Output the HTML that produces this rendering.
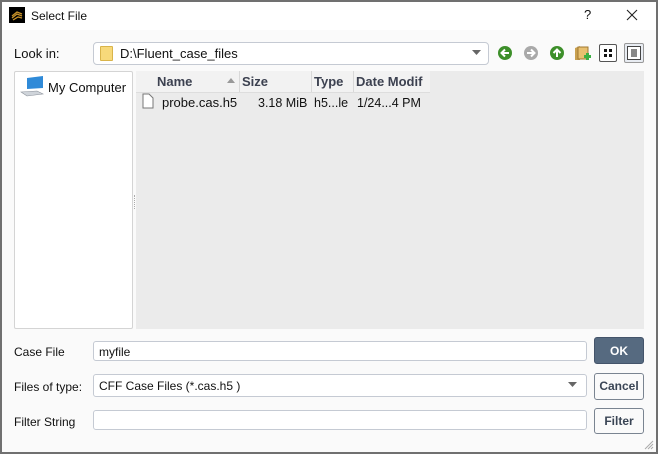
<!DOCTYPE html>
<html><head><meta charset="utf-8"><style>
*{box-sizing:border-box;margin:0;padding:0}
body{width:658px;height:454px;overflow:hidden;font-family:"Liberation Sans",sans-serif;font-size:12px;color:#111;background:#fafafa}
.win{position:absolute;left:0;top:0;width:658px;height:454px;background:#fafafa}
.frame{position:absolute;left:0;top:0;width:658px;height:454px;border:2px solid #707070}
.abs{position:absolute}
.title{left:0;top:0;width:658px;height:30px;background:#fff}
.inp{background:#fff;border:1px solid #c5cad3;border-radius:3px}
.btn{border:1px solid #7a8491;border-radius:3px;background:#fafafa;font-weight:bold;font-size:12px;color:#3a4555;text-align:center;line-height:24px}
.hdr{font-weight:bold;color:#3c4150;top:71px;height:21px;line-height:21px;border-right:1px solid #d8d8d8;font-size:13px}
</style></head><body><div class="win">
<div class="abs title"></div>
<div class="abs" style="left:9px;top:7px;width:16px;height:16px;background:#000"><svg width="16" height="16"><path d="M3 9 L8 5 L13 7 M3 11 L8 7 L13 9 M4 13 L9 10 L13 11" stroke="#c8922a" stroke-width="1.3" fill="none"/></svg></div>
<div class="abs" style="left:31px;top:9px;font-size:12px">Select File</div>
<div class="abs" style="left:584px;top:7px;font-size:13px">?</div>
<svg class="abs" style="left:626px;top:9px" width="12" height="12"><path d="M1 1L11 11M11 1L1 11" stroke="#222" stroke-width="1.1"/></svg>

<div class="abs" style="left:14px;top:46px;font-size:13px">Look in:</div>
<div class="abs inp" style="left:93px;top:42px;width:396px;height:23px;border-radius:4px"></div>
<div class="abs" style="left:100px;top:46px;width:13px;height:15px;background:#f7d97a;border:1px solid #d9b44a;border-radius:1px"></div>
<div class="abs" style="left:120px;top:46px;font-size:13px">D:\Fluent_case_files</div>
<svg class="abs" style="left:472px;top:50px" width="9" height="6"><path d="M0 0H9L4.5 5Z" fill="#666"/></svg>
<svg class="abs" style="left:497px;top:45px" width="16" height="16"><circle cx="8" cy="8" r="7" fill="#3d8f2a"/><path d="M12 8H5M8 4.5L4.5 8L8 11.5" stroke="#fff" stroke-width="2" fill="none"/></svg>
<svg class="abs" style="left:523px;top:45px" width="16" height="16"><circle cx="8" cy="8" r="7" fill="#a9a9a9"/><path d="M4 8H11M8 4.5L11.5 8L8 11.5" stroke="#fff" stroke-width="2" fill="none"/></svg>
<svg class="abs" style="left:549px;top:45px" width="16" height="16"><circle cx="8" cy="8" r="7" fill="#3d8f2a"/><path d="M8 12V5M4.5 8L8 4.5L11.5 8" stroke="#fff" stroke-width="2" fill="none"/></svg>
<svg class="abs" style="left:574px;top:44px" width="18" height="18"><path d="M1 4L6 2V16L1 16Z" fill="#c8a050"/><path d="M4 3H14V15H4Z" fill="#e8c070" stroke="#a07830"/><rect x="10" y="11" width="7" height="3" fill="#3cb043"/><rect x="12" y="9" width="3" height="7" fill="#3cb043"/></svg>
<div class="abs" style="left:599px;top:44px;width:18px;height:18px;border:1px solid #555;border-radius:2px;background:#fff"><svg width="16" height="16"><rect x="4" y="4" width="3" height="3" fill="#111"/><rect x="9" y="4" width="3" height="3" fill="#111"/><rect x="4" y="9" width="3" height="3" fill="#111"/><rect x="9" y="9" width="3" height="3" fill="#111"/></svg></div>
<div class="abs" style="left:624px;top:43px;width:20px;height:20px;border:1px solid #999;border-radius:2px;background:#e8ecf2"><div style="margin:2px;width:14px;height:14px;border:1px solid #444;background:#fff"><svg width="12" height="12"><path d="M3 3H9M3 5H9M3 7H9M3 9H9" stroke="#111"/></svg></div></div>

<div class="abs" style="left:14px;top:71px;width:119px;height:258px;background:#fff;border:1px solid #d4d4d4;border-radius:2px"></div>
<svg class="abs" style="left:19px;top:76px" width="26" height="22"><path d="M8 2L24 0V12L8 13Z" fill="#2f8ad8"/><path d="M2 16L18 15L24 18L8 20Z" fill="#cfd4da" stroke="#8a9099" stroke-width=".6"/></svg>
<div class="abs" style="left:48px;top:80px;font-size:13px">My Computer</div>

<div class="abs" style="left:136px;top:71px;width:508px;height:258px;background:#ebebeb"></div>
<div class="abs" style="left:136px;top:71px;width:294px;height:22px;background:#f2f2f2;border-bottom:1px solid #ddd"></div>
<div class="abs hdr" style="left:138px;width:102px;padding-left:19px">Name</div>
<div class="abs hdr" style="left:240px;width:72px;padding-left:2px">Size</div>
<div class="abs hdr" style="left:312px;width:42px;padding-left:2px">Type</div>
<div class="abs hdr" style="left:354px;width:76px;padding-left:2px;border:none">Date Modif</div>
<svg class="abs" style="left:227px;top:78px" width="8" height="5"><path d="M0 5L4 0L8 5Z" fill="#999"/></svg>
<svg class="abs" style="left:142px;top:93px" width="12" height="16"><path d="M1 1H7L11 5V15H1Z" fill="#fff" stroke="#777"/></svg>
<div class="abs" style="left:162px;top:95px;font-size:13px">probe.cas.h5</div>
<div class="abs" style="left:258px;top:96px;font-size:12.5px">3.18 MiB</div>
<div class="abs" style="left:314px;top:96px;font-size:12.5px">h5...le</div>
<div class="abs" style="left:357px;top:96px;font-size:12.5px">1/24...4 PM</div>
<div class="abs" style="left:134px;top:195px;width:1px;height:14px;border-left:1px dotted #aaa"></div>

<div class="abs" style="left:14px;top:345px">Case File</div>
<div class="abs inp" style="left:93px;top:341px;width:494px;height:20px"></div>
<div class="abs" style="left:99px;top:345px">myfile</div>
<div class="abs btn" style="left:594px;top:337px;width:50px;height:27px;background:#566a80;color:#fff;border-color:#44546a;line-height:26px">OK</div>

<div class="abs" style="left:14px;top:380px">Files of type:</div>
<div class="abs inp" style="left:93px;top:374px;width:494px;height:23px"></div>
<div class="abs" style="left:99px;top:379px">CFF Case Files (*.cas.h5 )</div>
<svg class="abs" style="left:568px;top:382px" width="9" height="6"><path d="M0 0H9L4.5 5Z" fill="#666"/></svg>
<div class="abs btn" style="left:594px;top:373px;width:50px;height:27px">Cancel</div>

<div class="abs" style="left:14px;top:415px">Filter String</div>
<div class="abs inp" style="left:93px;top:410px;width:494px;height:20px"></div>
<div class="abs btn" style="left:594px;top:408px;width:50px;height:26px">Filter</div>
<svg class="abs" style="left:642px;top:438px" width="12" height="12"><path d="M11 3L3 11M11 6L6 11M11 9L9 11" stroke="#aaa"/></svg>
<div class="frame"></div>
</div></body></html>
